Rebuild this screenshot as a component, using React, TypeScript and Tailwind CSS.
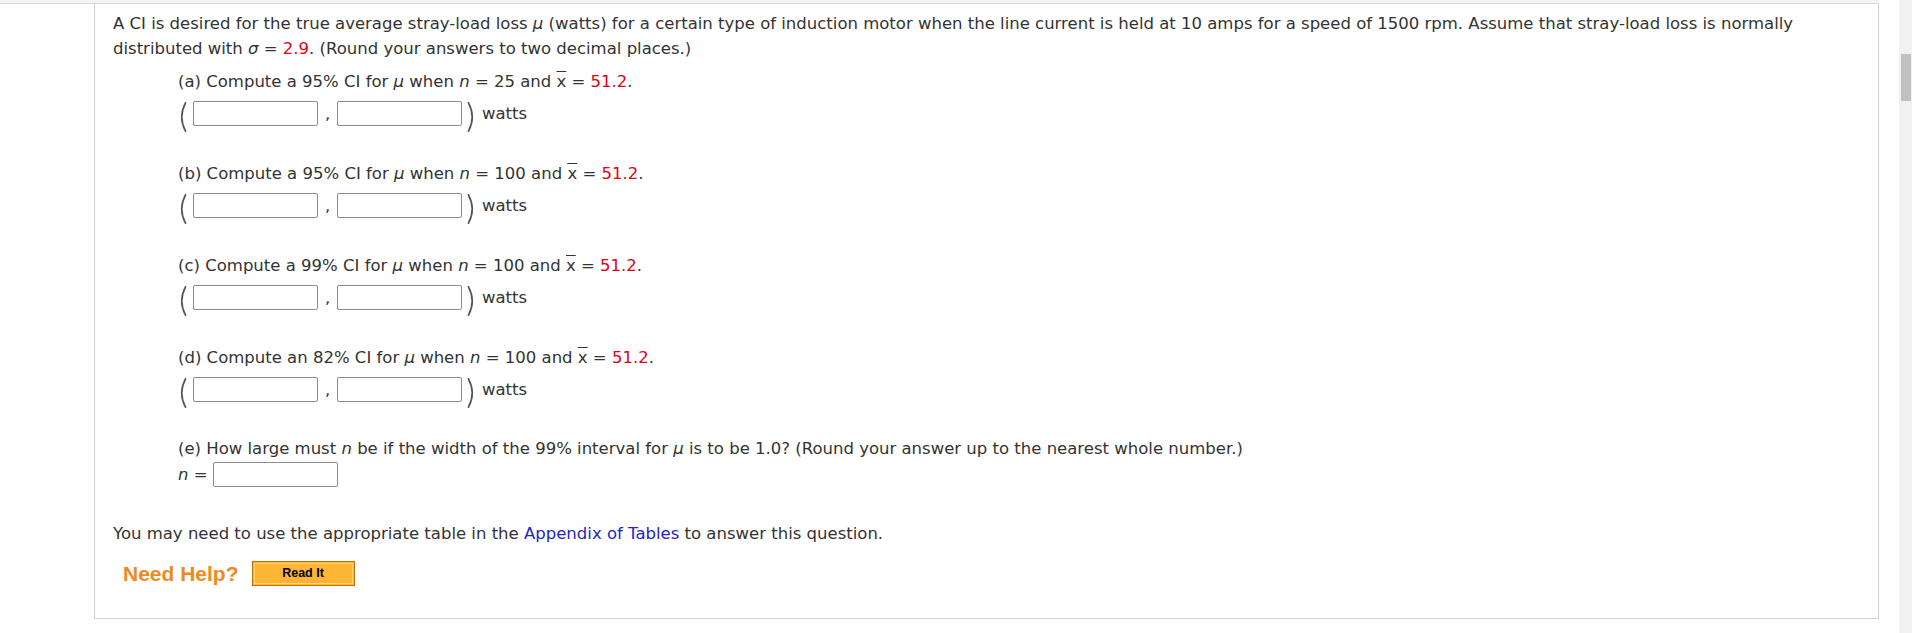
import React from "react";

function Paren({ right = false }: { right?: boolean }) {
  return (
    <svg width="9" height="30" viewBox="0 0 9 30" className="mt-[1px] shrink-0">
      <path
        d={right ? "M1.5 0.8 Q9 15 1.5 29.2" : "M7.5 0.8 Q0 15 7.5 29.2"}
        fill="none"
        stroke="#555"
        strokeWidth="1.7"
        strokeLinecap="round"
      />
    </svg>
  );
}

function Box() {
  return (
    <input
      type="text"
      className="w-[125px] h-[25px] border border-[#8c8c8c] rounded-[2px] bg-white outline-none"
    />
  );
}

function Mu() {
  return <span className="italic">μ</span>;
}

function N() {
  return <span className="italic">n</span>;
}

function XBar() {
  return <span className="overline">x</span>;
}

function Red({ children }: { children: React.ReactNode }) {
  return <span className="text-[#e60012]">{children}</span>;
}

function IntervalRow() {
  return (
    <div className="flex items-start mt-[7px]">
      <Paren />
      <div className="ml-[6px]">
        <Box />
      </div>
      <span className="w-[19px] text-center leading-[25px]">,</span>
      <Box />
      <div className="ml-[5px]">
        <Paren right />
      </div>
      <span className="ml-[6px] leading-[25px]">watts</span>
    </div>
  );
}

type Part = { label: string; ci: string; article: string; n: string };

const parts: Part[] = [
  { label: "(a)", ci: "95%", article: "a", n: "25" },
  { label: "(b)", ci: "95%", article: "a", n: "100" },
  { label: "(c)", ci: "99%", article: "a", n: "100" },
  { label: "(d)", ci: "82%", article: "an", n: "100" },
];

export default function App() {
  return (
    <div className="flex min-h-[633px] bg-white text-[#333] font-['DejaVu_Sans',Verdana,sans-serif] text-[16.5px] leading-[25px]">
      <div className="flex-1 flex flex-col">
        <div className="h-[4px] w-[1879px] bg-[#f3f3f3] border-b border-[#d9d9d9]" />
        <div className="ml-[94px] w-[1785px] border-x border-b border-[#d0d0d0] pl-[18px] pt-[7px] pb-[32px]">
          <p>
            A CI is desired for the true average stray-load loss <Mu /> (watts) for a certain type of induction motor
            when the line current is held at 10 amps for a speed of 1500 rpm. Assume that stray-load loss is normally
            <br />
            distributed with <span className="italic">σ</span> = <Red>2.9</Red>. (Round your answers to two decimal
            places.)
          </p>

          <div className="pl-[65px]">
            {parts.map((p, i) => (
              <div key={p.label} className={i === 0 ? "mt-[8px]" : "mt-[29px]"}>
                <p>
                  {p.label} Compute {p.article} {p.ci} CI for <Mu /> when <N /> = {p.n} and <XBar /> ={" "}
                  <Red>51.2</Red>.
                </p>
                <IntervalRow />
              </div>
            ))}

            <div className="mt-[28px]">
              <p>
                (e) How large must <N /> be if the width of the 99% interval for <Mu /> is to be 1.0? (Round your
                answer up to the nearest whole number.)
              </p>
              <div className="flex items-center mt-[1px]">
                <span>
                  <N /> =
                </span>
                <div className="ml-[5px]">
                  <Box />
                </div>
              </div>
            </div>
          </div>

          <p className="mt-[34px]">
            You may need to use the appropriate table in the{" "}
            <span className="text-[#2424c8]">Appendix of Tables</span> to answer this question.
          </p>

          <div className="flex items-center mt-[15px] ml-[10px] h-[25px]">
            <span className="font-['Liberation_Sans',Arial,sans-serif] font-bold text-[21px] text-[#f0891f] leading-[25px]">
              Need Help?
            </span>
            <button className="ml-[13px] w-[103px] h-[25px] border border-[#c46f00] bg-[#ffb534] flex items-center justify-center p-[1px]">
              <span className="w-full h-full border border-[#ffd27a] flex items-center justify-center font-['Liberation_Sans',Arial,sans-serif] font-bold text-[12.5px] text-black leading-none">
                Read It
              </span>
            </button>
          </div>
        </div>
      </div>
      <div className="w-[13px] bg-[#f1f1f1] self-stretch">
        <div className="mt-[54px] ml-[2px] w-[10px] h-[47px] bg-[#c1c1c1]" />
      </div>
    </div>
  );
}
